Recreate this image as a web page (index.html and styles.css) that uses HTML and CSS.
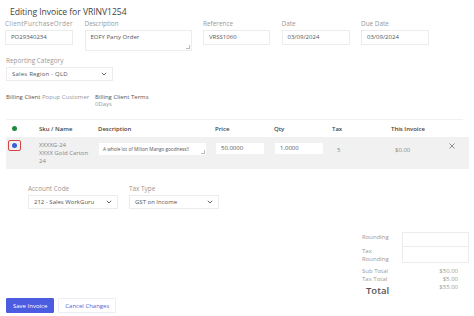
FILE: index.html
```html
<!DOCTYPE html>
<html lang="en">
<head>
    <meta charset="UTF-8">
    <meta name="viewport" content="width=device-width, initial-scale=1.0">
    <title>Editing Invoice</title>
    <link rel="stylesheet" href="styles.css">
</head>
<body>
    <h1>Editing Invoice for VRINV1254</h1>

    <!-- header fields -->
    <div class="fields">
        <div class="field w-po">
            <label>ClientPurchaseOrder</label>
            <div class="input">PO29340234</div>
        </div>
        <div class="field w-desc">
            <label>Description</label>
            <div class="input area">EOFY Party Order<span class="grip"></span></div>
        </div>
        <div class="field w-ref">
            <label>Reference</label>
            <div class="input">VRSS1060</div>
        </div>
        <div class="field w-date">
            <label>Date</label>
            <div class="input">03/09/2024</div>
        </div>
        <div class="field w-date">
            <label>Due Date</label>
            <div class="input">03/09/2024</div>
        </div>
    </div>

    <div class="field w-cat">
        <label>Reporting Category</label>
        <div class="input select">Sales Region - QLD
            <svg class="chev" width="6" height="4" viewBox="0 0 6 4"><path d="M0.8 0.8 L3 3 L5.2 0.8" fill="none" stroke="#555" stroke-width="0.9"/></svg>
        </div>
    </div>

    <div class="billing">
        <div class="bill-col"><strong>Billing Client</strong> Popup Customer</div>
        <div class="bill-col"><strong>Billing Client Terms</strong><br>0Days</div>
    </div>

    <!-- line items -->
    <div class="table">
        <div class="trow thead">
            <div class="cell c-dot"><span class="green-dot"></span></div>
            <div class="cell">Sku / Name</div>
            <div class="cell">Description</div>
            <div class="cell">Price</div>
            <div class="cell">Qty</div>
            <div class="cell">Tax</div>
            <div class="cell">This Invoice</div>
            <div class="cell"></div>
        </div>
        <div class="trow tbody">
            <div class="cell c-dot"><span class="pick"><span class="blue-dot"></span></span></div>
            <div class="cell sku">XXXXG-24<br>XXXX Gold Carton<br>24</div>
            <div class="cell"><div class="input item-desc">A whole lot of Milton Mango goodness!!<span class="grip"></span></div></div>
            <div class="cell"><div class="input num">50.0000</div></div>
            <div class="cell"><div class="input num">1.0000</div></div>
            <div class="cell plain">5</div>
            <div class="cell plain amount">$0.00</div>
            <div class="cell">
                <svg class="remove" width="6" height="6" viewBox="0 0 6 6"><path d="M0.5 0.5 L5.5 5.5 M5.5 0.5 L0.5 5.5" stroke="#666" stroke-width="0.7"/></svg>
            </div>
        </div>
    </div>

    <div class="subform">
        <div class="field w-sub">
            <label>Account Code</label>
            <div class="input select">212 - Sales WorkGuru
                <svg class="chev" width="6" height="4" viewBox="0 0 6 4"><path d="M0.8 0.8 L3 3 L5.2 0.8" fill="none" stroke="#555" stroke-width="0.9"/></svg>
            </div>
        </div>
        <div class="field w-sub">
            <label>Tax Type</label>
            <div class="input select">GST on Income
                <svg class="chev" width="6" height="4" viewBox="0 0 6 4"><path d="M0.8 0.8 L3 3 L5.2 0.8" fill="none" stroke="#555" stroke-width="0.9"/></svg>
            </div>
        </div>
    </div>

    <!-- totals -->
    <div class="totals">
        <div class="t-row">
            <div class="t-label">Rounding</div>
            <div class="t-input"></div>
        </div>
        <div class="t-row">
            <div class="t-label">Tax<br>Rounding</div>
            <div class="t-input"></div>
        </div>
        <div class="t-row small first">
            <div class="t-label">Sub Total</div>
            <div class="t-value">$50.00</div>
        </div>
        <div class="t-row small">
            <div class="t-label">Tax Total</div>
            <div class="t-value">$5.00</div>
        </div>
        <div class="t-row small">
            <div class="t-label total">Total</div>
            <div class="t-value">$55.00</div>
        </div>
    </div>

    <div class="actions">
        <button class="btn primary">Save Invoice</button>
        <button class="btn ghost">Cancel Changes</button>
    </div>
</body>
</html>
```

FILE: styles.css
```css
body {
    font-family: "Open Sans", "Noto Sans", sans-serif;
    margin: 0;
    padding: 0 5px 0 6px;
    color: #555;
    background: #fff;
}
h1 {
    font-size: 8.6px;
    font-weight: 500;
    color: #444;
    line-height: 15px;
    letter-spacing: -0.05px;
    margin: 5px 0 0 4px;
}
label {
    display: block;
    font-size: 6.4px;
    line-height: 8px;
    color: #999;
    margin-bottom: 2px;
}
.fields {
    display: flex;
    gap: 11.5px;
    align-items: flex-start;
}
.field {
    display: flex;
    flex-direction: column;
}
.w-po { width: 68px; margin-left: -1px; }
.w-po label { letter-spacing: 0.3px; }
.w-desc { width: 107px; }
.w-ref { width: 67px; }
.w-date { width: 68px; }
.w-cat { width: 107px; margin-top: 6px; }
.w-sub { width: 90px; }
.input {
    position: relative;
    box-sizing: border-box;
    height: 15px;
    border: 1px solid #ececec;
    background: #fff;
    font-size: 6px;
    line-height: 13px;
    padding: 0 5px;
    color: #555;
    white-space: nowrap;
    overflow: hidden;
}
.input.area {
    height: 21px;
    line-height: 7px;
    padding-top: 3px;
}
.grip {
    position: absolute;
    right: 1px;
    bottom: 1px;
    width: 3px;
    height: 3px;
    border-right: 1px solid #bbb;
    border-bottom: 1px solid #bbb;
}
.select {
    display: flex;
    align-items: center;
    justify-content: space-between;
    height: 14px;
}
.w-cat .select { letter-spacing: 0.2px; }
.chev { flex: none; }
.billing {
    display: flex;
    margin-top: 13px;
    font-size: 6px;
    line-height: 7px;
    color: #999;
}
.billing strong {
    font-weight: 500;
    color: #555;
}
.bill-col:first-child { width: 89px; }
.table {
    margin-top: 11px;
}
.trow {
    display: grid;
    grid-template-columns: 33px 59px 117px 59px 58px 59px 61px 1fr;
    align-items: center;
    font-size: 6px;
}
.thead {
    height: 18px;
    border-top: 1px solid #f1f1f1;
    margin-right: 6px;
    box-sizing: border-box;
    font-weight: 600;
    color: #444;
}
.tbody {
    height: 32px;
    background: #f1f1f1;
    align-items: start;
    color: #888;
}
.c-dot {
    display: flex;
    justify-content: flex-start;
}
.green-dot {
    width: 5px;
    height: 5px;
    border-radius: 50%;
    background: #1f8a3a;
    margin-left: 6px;
}
.pick {
    display: flex;
    align-items: center;
    justify-content: center;
    width: 11px;
    height: 9px;
    border: 1px solid #d64545;
    border-radius: 2px;
    margin: 3px 0 0 2px;
}
.blue-dot {
    width: 5px;
    height: 5px;
    border-radius: 50%;
    background: #3c5fd8;
}
.sku {
    line-height: 8px;
    padding-top: 4px;
}
.item-desc {
    width: 109px;
    height: 14px;
    margin-top: 5px;
    line-height: 12px;
    padding: 0 4px;
    font-size: 4.7px;
    border-color: #f1f1f1;
}
.num {
    width: 50px;
    height: 13px;
    margin-top: 5px;
    line-height: 11px;
    border-color: #f1f1f1;
}
.plain {
    padding-top: 9px;
    padding-left: 5px;
}
.amount {
    padding-left: 4px;
}
.remove {
    margin: 6px 0 0 0;
    position: relative;
    left: -3px;
}
.subform {
    display: flex;
    gap: 11px;
    margin: 16px 0 0 22px;
}
.totals {
    width: 107px;
    margin: 23px 0 0 auto;
    font-size: 6px;
    color: #999;
}
.t-row {
    display: flex;
}
.t-label {
    width: 40px;
    line-height: 8px;
}
.t-row:first-child .t-label {
    padding-top: 1px;
}
.t-input {
    width: 67px;
    height: 15px;
    box-sizing: border-box;
    border: 1px solid #ececec;
}
.t-row + .t-row .t-input {
    height: 16px;
    border-top: none;
}
.t-row.first {
    margin-top: 4px;
}
.t-value {
    flex: 1;
    text-align: right;
    padding-right: 11px;
    line-height: 8px;
}
.t-label.total {
    font-size: 9.5px;
    font-weight: 600;
    color: #555;
    line-height: 14px;
    padding-left: 4px;
    margin-top: 1px;
}
.actions {
    display: flex;
    gap: 4px;
    margin-top: 0;
}
.btn {
    font-family: inherit;
    font-size: 6px;
    height: 15px;
    padding: 0 6px;
    border-radius: 1px;
    cursor: pointer;
}
.primary {
    background: #4b5ce0;
    border: 1px solid #4b5ce0;
    color: #fff;
}
.ghost {
    background: #fff;
    border: 1px solid #eceef6;
    color: #5561d6;
}
```
